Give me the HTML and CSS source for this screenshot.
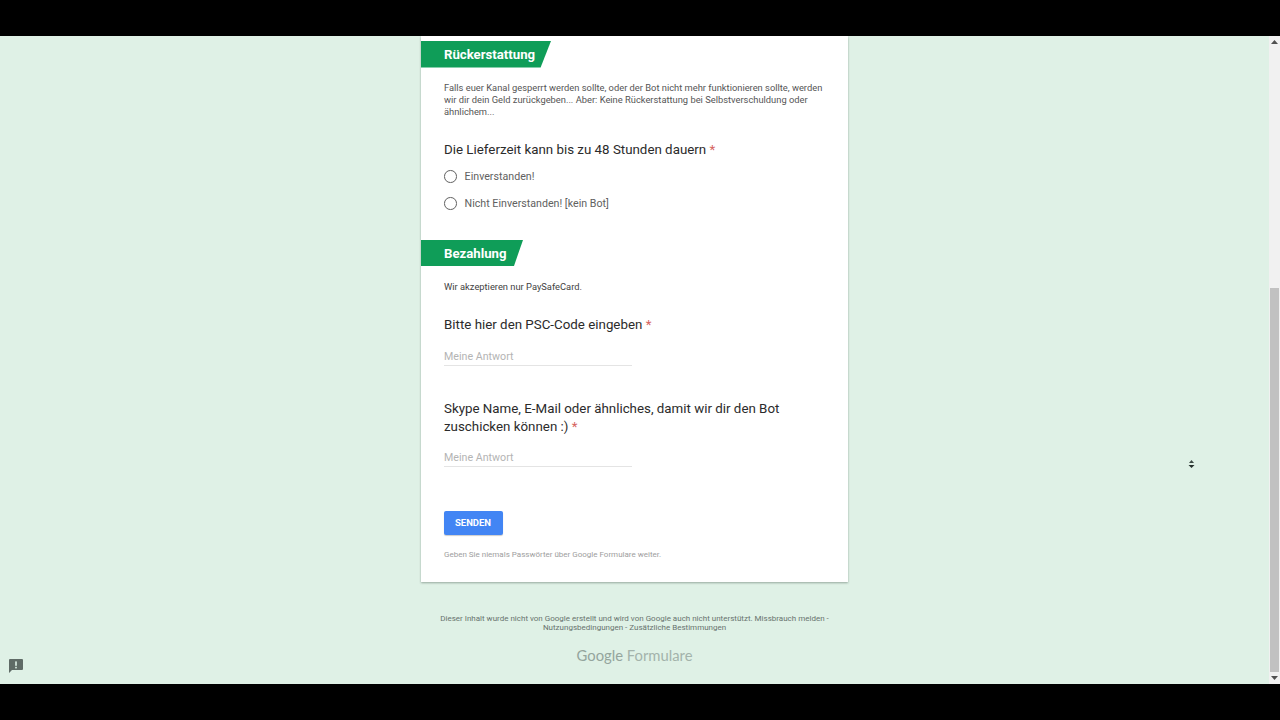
FILE: index.html
```html
<!DOCTYPE html>
<html lang="de">
<head>
    <meta charset="UTF-8">
    <title>Google Formulare</title>
    <link rel="stylesheet" href="styles.css">
</head>
<body>
    <div class="letterbox"></div>
    <div class="window">
        <div class="page">
            <form class="card" action="#" method="post">
                <!-- Rueckerstattung -->
                <h2 class="section-title title-refund">Rückerstattung</h2>
                <p class="section-text">Falls euer Kanal gesperrt werden sollte, oder der Bot nicht mehr funktionieren sollte, werden wir dir dein Geld zurückgeben... Aber: Keine Rückerstattung bei Selbstverschuldung oder ähnlichem...</p>
                <div class="question question-radio">
                    <div class="question-label">Die Lieferzeit kann bis zu 48 Stunden dauern <span class="required">*</span></div>
                    <div class="radio-row"><span class="radio"></span>Einverstanden!</div>
                    <div class="radio-row"><span class="radio"></span>Nicht Einverstanden! [kein Bot]</div>
                </div>

                <!-- Bezahlung -->
                <h2 class="section-title title-payment">Bezahlung</h2>
                <p class="section-text text-dark">Wir akzeptieren nur PaySafeCard.</p>
                <div class="question question-code">
                    <div class="question-label">Bitte hier den PSC-Code eingeben <span class="required">*</span></div>
                    <div class="answer">Meine Antwort</div>
                </div>
                <div class="question question-contact">
                    <div class="question-label">Skype Name, E-Mail oder ähnliches, damit wir dir den Bot zuschicken können :) <span class="required">*</span></div>
                    <div class="answer">Meine Antwort</div>
                </div>

                <button class="send" type="button">SENDEN</button>
                <p class="password-note">Geben Sie niemals Passwörter über Google Formulare weiter.</p>
            </form>

            <footer class="footer">
                <p class="disclaimer">Dieser Inhalt wurde nicht von Google erstellt und wird von Google auch nicht unterstützt. Missbrauch melden - Nutzungsbedingungen - Zusätzliche Bestimmungen</p>
                <div class="brand"><span class="brand-google">Google</span> <span class="brand-forms">Formulare</span></div>
            </footer>

            <!-- Report button, bottom left -->
            <svg class="report-icon" viewBox="0 0 14 14" width="14" height="14">
                <path d="M1 0h12a1 1 0 0 1 1 1v9a1 1 0 0 1-1 1H3l-3 3V1a1 1 0 0 1 1-1z" fill="#5f6b66"/>
                <rect x="6.2" y="2.4" width="1.6" height="4.4" fill="#dff1e6"/>
                <rect x="6.2" y="7.8" width="1.6" height="1.6" fill="#dff1e6"/>
            </svg>

            <!-- Autoscroll cursor -->
            <svg class="cursor-icon" viewBox="0 0 7 8" width="7" height="8">
                <path d="M3.5 0L6 3H1z" fill="#3c4a44"/>
                <path d="M0.5 5h6L3.5 8z" fill="#26302c"/>
            </svg>
        </div>

        <div class="scrollbar">
            <svg class="scroll-arrow" viewBox="0 0 7 4" width="7" height="4"><path d="M3.5 0L7 4H0z" fill="#505050"/></svg>
            <div class="scroll-track"><div class="scroll-thumb"></div></div>
            <svg class="scroll-arrow" viewBox="0 0 7 4" width="7" height="4"><path d="M0 0h7L3.5 4z" fill="#505050"/></svg>
        </div>
    </div>
    <div class="letterbox"></div>
</body>
</html>
```

FILE: styles.css
```css
html, body {
    height: 100%;
}

body {
    margin: 0;
    display: flex;
    flex-direction: column;
    background: #000;
    font-family: Roboto, "Liberation Sans", sans-serif;
    color: #212121;
    overflow: hidden;
}

/* Black bars above and below the video */
.letterbox {
    height: 36px;
    flex: none;
    background: #000;
}

.window {
    flex: 1;
    display: flex;
    min-height: 0;
}

.page {
    flex: 1;
    position: relative;
    background: #dff1e6;
    overflow: hidden;
}

/* Form card */
.card {
    width: 427px;
    height: 546px;
    margin: 0 auto;
    padding-top: 5px;
    box-sizing: border-box;
    background: #fff;
    box-shadow: 0 1px 2px rgba(60, 80, 70, 0.45);
}

.section-title {
    height: 26.5px;
    margin: 0;
    padding-left: 23px;
    box-sizing: border-box;
    background: #0f9d58;
    color: #fff;
    font-size: 13.2px;
    font-weight: 700;
    line-height: 27px;
}

.title-refund {
    width: 130px;
    clip-path: polygon(0 0, 100% 0, 92% 100%, 0 100%);
}

.title-payment {
    width: 102px;
    clip-path: polygon(0 0, 100% 0, 91% 100%, 0 100%);
}

.section-text {
    margin: 14px 0 0 23px;
    width: 385px;
    font-size: 9.33px;
    line-height: 12.3px;
    color: #555;
}

.text-dark {
    margin-top: 14.5px;
    color: #424242;
}

.question {
    margin-left: 23px;
}

.question-radio {
    margin-top: 23px;
    height: 98.5px;
}

.question-code {
    margin-top: 23px;
    height: 58px;
}

.question-contact {
    margin-top: 26px;
    height: 76px;
}

.question-label {
    width: 385px;
    font-size: 13.33px;
    line-height: 18px;
    color: #2b2b2b;
}

.required {
    color: #d6645f;
}

.radio-row {
    display: flex;
    align-items: center;
    gap: 8px;
    height: 18px;
    margin-top: 9px;
    font-size: 10.67px;
    color: #616161;
}

.question-label + .radio-row {
    margin-top: 8px;
}

.radio {
    width: 10.6px;
    height: 10.6px;
    border: 1.4px solid #616161;
    border-radius: 50%;
    flex: none;
}

.answer {
    width: 188px;
    height: 17px;
    margin-top: 14px;
    border-bottom: 1px solid #e4e4e4;
    font-size: 10.67px;
    line-height: 18px;
    color: #b4b4b4;
}

.question-contact .answer {
    margin-top: 13px;
}

.send {
    display: block;
    width: 59px;
    height: 24px;
    margin: 35px 0 0 23px;
    padding: 0 1px 1px 0;
    border: none;
    border-radius: 2px;
    background: #4285f4;
    color: #fff;
    font-family: inherit;
    font-size: 9.5px;
    font-weight: 700;
    box-shadow: 0 1px 1px rgba(0, 0, 0, 0.2);
}

.password-note {
    margin: 14px 0 0 23px;
    font-size: 8px;
    line-height: 12px;
    color: #9e9e9e;
}

/* Footer */
.footer {
    width: 427px;
    margin: 0 auto;
    text-align: center;
}

.disclaimer {
    margin: 32px 0 0;
    padding: 0 8px;
    font-size: 8px;
    line-height: 9.2px;
    color: #68736e;
}

.brand {
    margin-top: 12.5px;
    font-family: Lato, Roboto, sans-serif;
    font-size: 14.8px;
    line-height: 20px;
}

.brand-google {
    color: #94a59d;
}

.brand-forms {
    color: #a3b3ab;
}

.report-icon {
    position: absolute;
    left: 9px;
    top: 623px;
}

.cursor-icon {
    position: absolute;
    left: 1188px;
    top: 424px;
}

/* Scrollbar */
.scrollbar {
    width: 11px;
    flex: none;
    display: flex;
    flex-direction: column;
    align-items: center;
    background: #f1f1f1;
}

.scroll-arrow {
    flex: none;
    margin: 4px 0;
}

.scroll-track {
    flex: 1;
    align-self: stretch;
    display: flex;
    flex-direction: column;
    justify-content: flex-end;
}

.scroll-thumb {
    height: 384px;
    margin: 0 1px;
    background: #c1c1c1;
}
```
